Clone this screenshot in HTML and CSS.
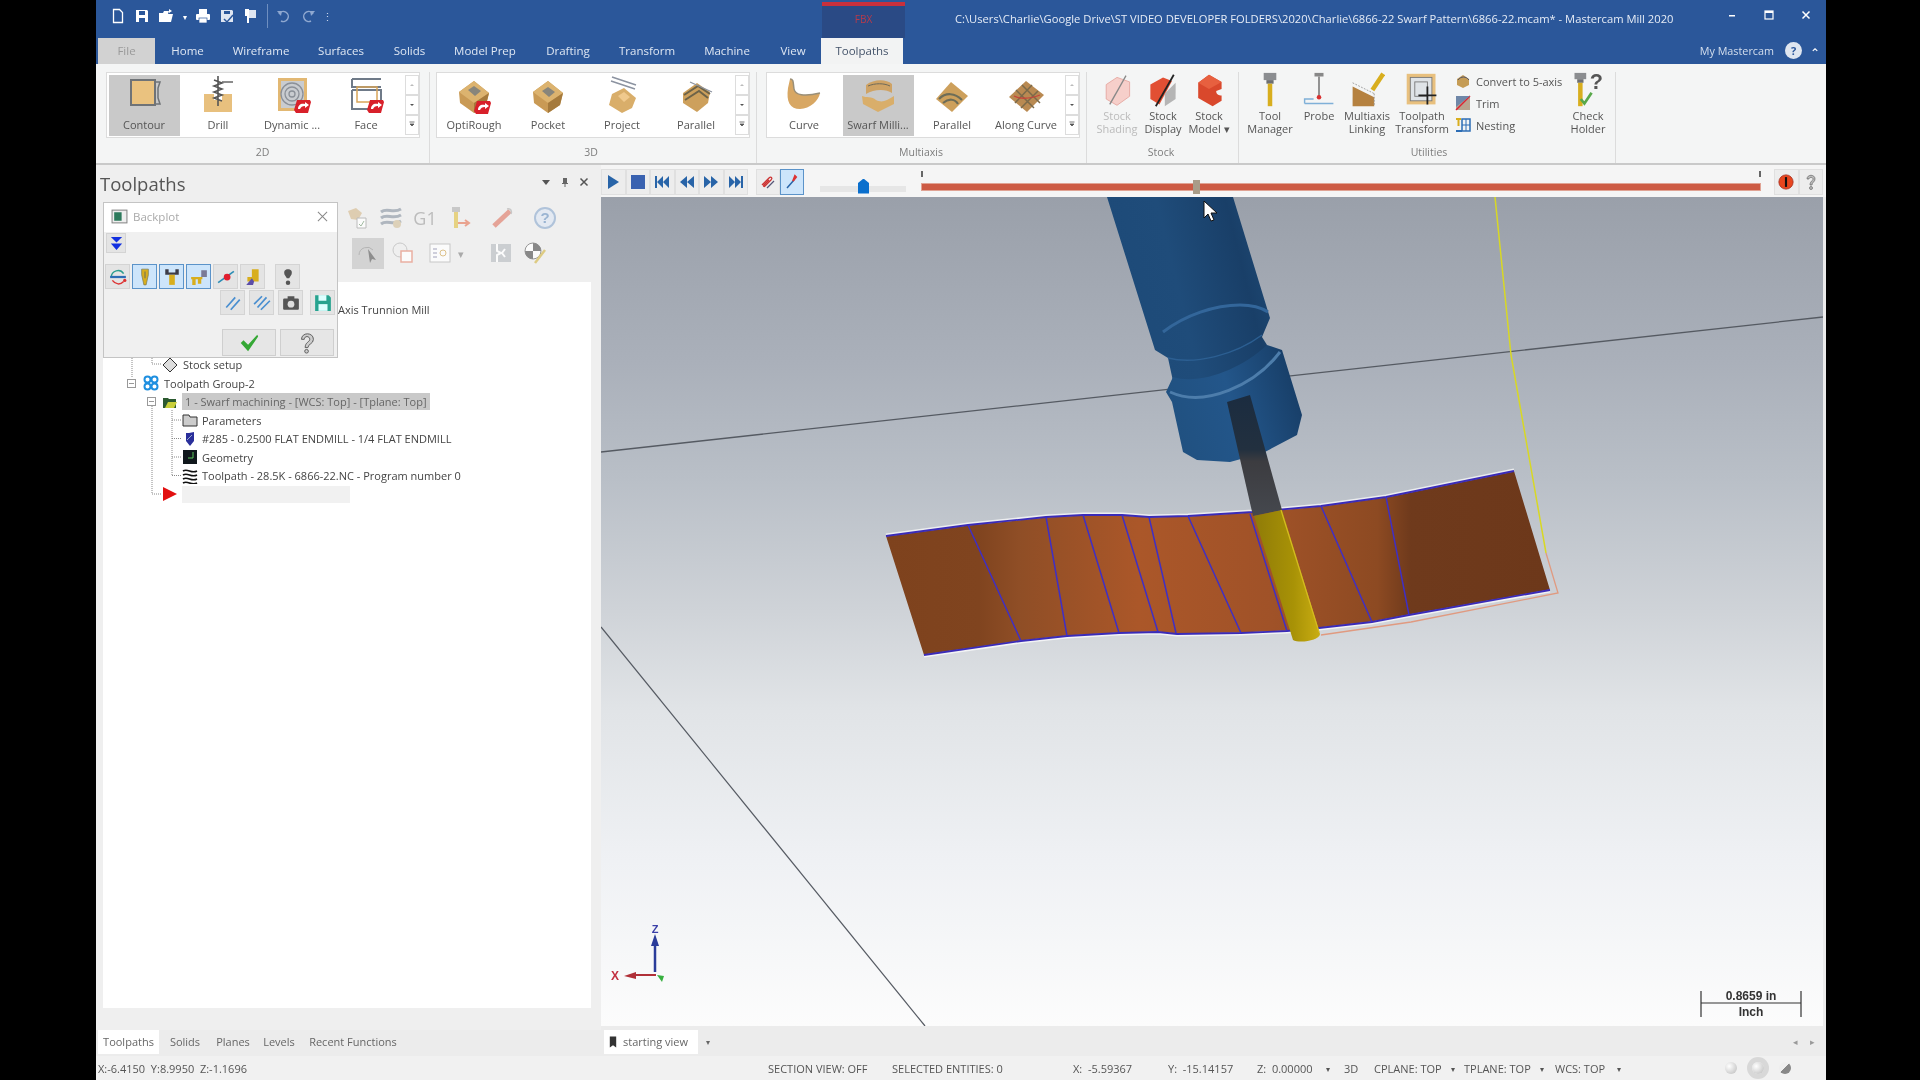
FILE: index.html
```html
<!DOCTYPE html>
<html lang="en">
<head>
<meta charset="utf-8">
<title>Mastercam Mill 2020</title>
<link rel="stylesheet" href="styles.css">
</head>
<body>
<svg class="defs" width="0" height="0" aria-hidden="true">
  <symbol id="badge" viewBox="0 0 18 16">
    <path d="M3 2h13l1 2-3 11H2L0 12z" fill="#d8202a"/>
    <path d="M4 11c0-4 3-6 7-5V4l4 3-4 3V8c-3 0-4 1-5 3z" fill="#fff"/>
  </symbol>
  <symbol id="block" viewBox="0 0 40 40">
    <path d="M20 5l15 12-3 12-12 8L6 27 5 16z" fill="#c99a55"/>
    <path d="M20 5l15 12-15 10L5 16z" fill="#dcb36f"/>
    <path d="M20 27l15-10-3 12-12 8z" fill="#a57a3c"/>
  </symbol>
  <symbol id="tool" viewBox="0 0 24 40">
    <rect x="5" y="1" width="14" height="8" fill="#8b8d90"/>
    <rect x="8" y="9" width="8" height="4" fill="#6d6f72"/>
    <rect x="9.500" y="13" width="5" height="25" fill="#d8ae1e"/>
  </symbol>
  <symbol id="scrollcol" viewBox="0 0 14 60">
    <rect x=".5" y=".5" width="13" height="19" fill="#fff" stroke="#ddd"/>
    <rect x=".5" y="20.500" width="13" height="19" fill="#fff" stroke="#ddd"/>
    <rect x=".5" y="40.500" width="13" height="19" fill="#fff" stroke="#ddd"/>
    <path d="M5 11l2-2 2 2z" fill="#bbb"/>
    <path d="M5 29h4l-2 2z" fill="#555"/>
    <path d="M4.500 47h5M5 49h4l-2 2z" stroke="#555" fill="#555" stroke-width=".8"/>
  </symbol>
</svg>

<div class="window">
  <header class="titlebar">
    <div class="qat">
      <span class="q"><svg viewBox="0 0 16 16"><path d="M3.500 1.500h6l3 3v10h-9z" fill="none" stroke="#fff" stroke-width="1.300"/></svg></span>
      <span class="q"><svg viewBox="0 0 16 16"><path d="M2 2h11l1 1v11H2z" fill="#fff"/><rect x="5" y="3" width="6" height="4" fill="#2b579a"/><rect x="5" y="10" width="6" height="4" fill="#2b579a"/></svg></span>
      <span class="q"><svg viewBox="0 0 16 16"><path d="M1 5h4l1-2h5l-1 3h5l-2 8H1z" fill="#fff"/><path d="M11 1l3 2-3 2z" fill="#fff"/></svg></span>
      <span class="qcaret">▾</span>
      <span class="q"><svg viewBox="0 0 16 16"><rect x="4" y="1" width="8" height="5" fill="#fff"/><rect x="1" y="6" width="14" height="6" rx="1" fill="#fff"/><rect x="4" y="10" width="8" height="5" fill="#fff" stroke="#2b579a" stroke-width=".7"/></svg></span>
      <span class="q"><svg viewBox="0 0 16 16"><path d="M2 2h11l1 1v11H2z" fill="#dfe6f2"/><rect x="5" y="3" width="6" height="3" fill="#2b579a"/><path d="M5 11l3 3 6-7" fill="none" stroke="#2b579a" stroke-width="1.500"/></svg></span>
      <span class="q"><svg viewBox="0 0 16 16"><path d="M2 1h4v14H4V8H2z" fill="#fff"/><path d="M6 2h7v8H6z" fill="#dfe6f2"/></svg></span>
      <span class="qsep"></span>
      <span class="q"><svg viewBox="0 0 16 16"><path d="M3 6a5 5 0 1 1 2 7" fill="none" stroke="#8fa8d0" stroke-width="1.500"/><path d="M1 3l5 0-1 5z" fill="#8fa8d0"/></svg></span>
      <span class="q"><svg viewBox="0 0 16 16"><path d="M13 6a5 5 0 1 0-2 7" fill="none" stroke="#8fa8d0" stroke-width="1.500"/><path d="M15 3l-5 0 1 5z" fill="#8fa8d0"/></svg></span>
      <span class="qmore">⋮</span>
    </div>
    <div class="ctx">FBX</div>
    <div class="doc">C:\Users\Charlie\Google Drive\ST VIDEO DEVELOPER FOLDERS\2020\Charlie\6866-22 Swarf Pattern\6866-22.mcam* - Mastercam Mill 2020</div>
    <div class="winctl">
      <span class="wc"><svg viewBox="0 0 12 12"><rect x="3" y="6" width="6" height="1.500" fill="#fff"/></svg></span>
      <span class="wc"><svg viewBox="0 0 12 12"><rect x="2" y="2" width="8" height="8" fill="none" stroke="#fff" stroke-width="1.200"/><rect x="2" y="2" width="8" height="2" fill="#fff"/></svg></span>
      <span class="wc"><svg viewBox="0 0 12 12"><path d="M2.500 2.500l7 7m0-7l-7 7" stroke="#fff" stroke-width="1.500"/></svg></span>
    </div>
  </header>

  <nav class="tabbar">
    <span class="tab file">File</span>
    <span class="tab t-home">Home</span>
    <span class="tab t-wire">Wireframe</span>
    <span class="tab t-surf">Surfaces</span>
    <span class="tab t-soli">Solids</span>
    <span class="tab t-prep">Model Prep</span>
    <span class="tab t-draf">Drafting</span>
    <span class="tab t-tran">Transform</span>
    <span class="tab t-mach">Machine</span>
    <span class="tab t-view">View</span>
    <span class="tab active">Toolpaths</span>
    <span class="mymc">My Mastercam</span>
    <span class="helpdot">?</span>
    <span class="collapse">⌃</span>
  </nav>

  <section class="ribbon">
    <div class="group g2d">
      <div class="gbody">
        <div class="gallery">
          <div class="item sel"><svg class="ic" viewBox="0 0 40 40"><rect x="7" y="4" width="24" height="25" fill="#eac27f" stroke="#6f7377" stroke-width="2"/><path d="M32 6h4l-2 6v10l2 6h-4" fill="none" stroke="#6f7377" stroke-width="1.500"/></svg><span>Contour</span></div>
          <div class="item"><svg class="ic" viewBox="0 0 40 40"><path d="M6 18h10v6h8v-6h10v18H6z" fill="#e8c07e"/><path d="M20 0v30M16 4l8 3-8 3 8 3-8 3 8 3-8 3 8 3" stroke="#555" stroke-width="1.600" fill="none"/><path d="M24 6h11" stroke="#666" stroke-width="1.500"/></svg><span>Drill</span></div>
          <div class="item"><svg class="ic" viewBox="0 0 40 40"><rect x="6" y="2" width="29" height="33" fill="#e2b873"/><rect x="9" y="5" width="23" height="27" fill="#c9ccd0"/><circle cx="20" cy="18" r="11" fill="none" stroke="#8b9098" stroke-width="1.300"/><circle cx="20" cy="18" r="7" fill="none" stroke="#8b9098" stroke-width="1.300"/><circle cx="20" cy="18" r="3" fill="none" stroke="#8b9098" stroke-width="1.300"/><use href="#badge" x="22" y="22" width="18" height="16"/></svg><span>Dynamic ...</span></div>
          <div class="item"><svg class="ic" viewBox="0 0 40 40"><path d="M6 3h29M6 3v8h29M6 14h29v14M6 14v19h20" fill="none" stroke="#6f7a88" stroke-width="2"/><rect x="11" y="11" width="20" height="15" fill="none" stroke="#d8a55a" stroke-width="1.500"/><use href="#badge" x="21" y="22" width="18" height="16"/></svg><span>Face</span></div>
          <svg class="scroll" viewBox="0 0 14 60"><use href="#scrollcol"/></svg>
        </div>
      </div>
      <div class="glabel">2D</div>
    </div>

    <div class="group g3d">
      <div class="gbody">
        <div class="gallery">
          <div class="item"><svg class="ic" viewBox="0 0 40 40"><use href="#block"/><path d="M14 14l6-4 7 5-6 5z" fill="#88857b"/><use href="#badge" x="20" y="23" width="18" height="16"/></svg><span>OptiRough</span></div>
          <div class="item"><svg class="ic" viewBox="0 0 40 40"><use href="#block"/><path d="M14 15l6-4 7 5-6 5z" fill="#88857b"/></svg><span>Pocket</span></div>
          <div class="item"><svg class="ic" viewBox="0 0 40 40"><path d="M10 1l24 8M9 5l24 8" stroke="#8c93a0" stroke-width="1.500"/><path d="M10 18l12-6 12 10-4 10-10 5-13-8z" fill="#d9ae6a"/><path d="M16 20l6-4 6 5-6 5z" fill="#f0c98d"/></svg><span>Project</span></div>
          <div class="item"><svg class="ic" viewBox="0 0 40 40"><path d="M7 17L21 7l13 9-2 11-11 9L7 27z" fill="#cda05c"/><path d="M8 19l14-9 12 8M9 24l14-9 9 7" stroke="#6d6348" stroke-width="2" fill="none"/><path d="M14 6l22 10" stroke="#8c93a0" stroke-width="1.300"/></svg><span>Parallel</span></div>
          <svg class="scroll" viewBox="0 0 14 60"><use href="#scrollcol"/></svg>
        </div>
      </div>
      <div class="glabel">3D</div>
    </div>

    <div class="group gmulti">
      <div class="gbody">
        <div class="gallery">
          <div class="item"><svg class="ic" viewBox="0 0 40 40"><path d="M6 3c4 0 3 4 4 10s10 8 26 4c-1 7-10 16-20 16S2 26 4 12z" fill="#d8a763"/><path d="M6 3c4 0 3 4 4 10s10 8 26 4" fill="none" stroke="#9a8f78" stroke-width="1.500"/></svg><span>Curve</span></div>
          <div class="item sel"><svg class="ic" viewBox="0 0 40 40"><path d="M8 9c8-6 20-6 26-1v9c-6-4-18-4-26 1z" fill="#cfa365"/><path d="M4 20c4 2 10 0 14 4 6 3 10 1 18-4v8L20 36 5 28z" fill="#d9ae6a"/><path d="M10 10c7-3 16-3 22 0" fill="none" stroke="#6f6a5a"/></svg><span>Swarf Milli...</span></div>
          <div class="item"><svg class="ic" viewBox="0 0 40 40"><path d="M4 23L19 6l17 14-16 16z" fill="#cda05c"/><path d="M7 23c7-7 16-6 23 1M11 27c6-5 12-4 15 1" stroke="#6d6d58" stroke-width="2.200" fill="none"/></svg><span>Parallel</span></div>
          <div class="item"><svg class="ic" viewBox="0 0 40 40"><path d="M3 21L20 5l18 14-17 17z" fill="#b98a52"/><path d="M10 14l18 18M16 9l18 18M26 9L9 27M32 15L15 32" stroke="#7b6a4a" stroke-width="1.500"/><path d="M8 20c8 4 18 2 26-1" stroke="#c8443a" stroke-width="1.300" fill="none"/></svg><span>Along Curve</span></div>
          <svg class="scroll" viewBox="0 0 14 60"><use href="#scrollcol"/></svg>
        </div>
      </div>
      <div class="glabel">Multiaxis</div>
    </div>

    <div class="group gstock">
      <div class="gbody">
        <div class="big w46 dim"><svg class="ic" viewBox="0 0 40 40"><path d="M8 14l12-8 14 5v16l-14 10-12-7z" fill="#f6cfca" stroke="#e5a7a0"/><path d="M12 36L30 4" stroke="#888" stroke-width="1.500"/></svg><span>Stock<br>Shading</span></div>
        <div class="big w46"><svg class="ic" viewBox="0 0 40 40"><path d="M6 14l14-8 10 4-14 26-10-6z" fill="#e24f33"/><path d="M22 24l12-12v18l-12 8z" fill="#b5b5b5"/><path d="M12 38L32 3" stroke="#222" stroke-width="2"/></svg><span>Stock<br>Display</span></div>
        <div class="big w46"><svg class="ic" viewBox="0 0 40 40"><path d="M8 12l12-9 14 8v8l-6 2c0 4 3 5 6 5v6l-10 6-16-9z" fill="#d9482c"/><path d="M8 12l12-9 14 8-14 8z" fill="#e7603f"/></svg><span>Stock<br>Model ▾</span></div>
      </div>
      <div class="glabel">Stock</div>
    </div>

    <div class="group gutil">
      <div class="gbody">
        <div class="big w50"><svg class="ic" viewBox="0 0 24 40"><use href="#tool"/></svg><span>Tool<br>Manager</span></div>
        <div class="big w48"><svg class="ic" viewBox="0 0 40 40"><rect x="15" y="1" width="10" height="4" fill="#888"/><path d="M20 5v22" stroke="#888" stroke-width="2"/><circle cx="20" cy="28" r="2.500" fill="#d93030"/><path d="M4 35h32M4 35v-5h10" stroke="#7fb0d8" stroke-width="1.600" fill="none"/></svg><span>Probe</span></div>
        <div class="big w48"><svg class="ic" viewBox="0 0 40 40"><path d="M4 16l24 12v10H4z" fill="#b5813f"/><path d="M4 12l24 12" stroke="#999" stroke-dasharray="2 1.500" fill="none"/><path d="M26 20L38 2" stroke="#d8ae1e" stroke-width="5"/><path d="M28 24v14" stroke="#999" stroke-dasharray="2 1.500"/></svg><span>Multiaxis<br>Linking</span></div>
        <div class="big w62"><svg class="ic" viewBox="0 0 40 40"><rect x="3" y="2" width="32" height="34" fill="#e8c07e"/><rect x="7" y="6" width="24" height="26" fill="#dfe3e7" stroke="#777"/><rect x="12" y="11" width="14" height="16" fill="none" stroke="#777"/><path d="M26 16v20M16 26h20" stroke="#222" stroke-width="2"/></svg><span>Toolpath<br>Transform</span></div>
        <div class="smalls">
          <div class="sm"><svg viewBox="0 0 16 16"><path d="M2 6l6-4 6 4v6l-6 3-6-3z" fill="#c59c55"/><path d="M3 7c3-4 8-4 11 0" stroke="#556" fill="none"/></svg><span>Convert to 5-axis</span></div>
          <div class="sm"><svg viewBox="0 0 16 16"><rect x="1" y="1" width="14" height="14" fill="#b8a48e"/><path d="M1 15L15 1" stroke="#d23" stroke-width="1.500"/><path d="M1 1h14L1 12z" fill="#6f87a8"/></svg><span>Trim</span></div>
          <div class="sm"><svg viewBox="0 0 16 16"><rect x="7" y="2" width="8" height="12" fill="none" stroke="#2c6db5" stroke-width="1.500"/><path d="M7 8h8M11 2v12" stroke="#2c6db5"/><path d="M1 2h5M3.500 2v7" stroke="#d8ae1e" stroke-width="2"/><path d="M1 14h6" stroke="#2c6db5" stroke-width="2"/></svg><span>Nesting</span></div>
        </div>
        <div class="big w50 check"><svg class="ic" viewBox="0 0 40 40"><rect x="5" y="1" width="13" height="7" fill="#8b8d90"/><rect x="8" y="8" width="7" height="4" fill="#6d6f72"/><rect x="9" y="12" width="5" height="26" fill="#d8ae1e"/><path d="M12 30l4 5 8-12" fill="none" stroke="#58a84a" stroke-width="3"/><text x="22" y="19" class="q-mark">?</text></svg><span>Check<br>Holder</span></div>
      </div>
      <div class="glabel gl-util">Utilities</div>
    </div>
  </section>

  <div class="main">
    <aside class="panel">
      <div class="phead">
        <span class="ptitle">Toolpaths</span>
        <span class="pctl">
          <svg viewBox="0 0 12 12"><path d="M2 4h8L6 9z" fill="#555"/></svg>
          <svg viewBox="0 0 12 12"><path d="M4 2h4v5h1v1H6.500v3h-1V8H3V7h1z" fill="#666"/></svg>
          <svg viewBox="0 0 12 12"><path d="M2.500 2.500l7 7m0-7l-7 7" stroke="#555" stroke-width="1.500"/></svg>
        </span>
      </div>
      <div class="tools r1">
        <span class="tl"><svg viewBox="0 0 24 24"><path d="M3 5l8-3 6 5-4 7-7-1z" fill="#d9c29d"/><path d="M12 12h9v10h-9z" fill="#fff" stroke="#aaa"/><path d="M14 18l2 2 3-5" stroke="#8a8" fill="none"/></svg></span>
        <span class="tl"><svg viewBox="0 0 24 24"><path d="M2 6c6-5 12 2 20-3M2 12c6-5 12 2 20-3M2 18c6-5 12 2 20-3" stroke="#9aa4af" stroke-width="3" fill="none"/><circle cx="18" cy="18" r="4" fill="#d8c8a8"/></svg></span>
        <span class="tl g1">G1</span>
        <span class="tl"><svg viewBox="0 0 24 24"><rect x="5" y="1" width="8" height="5" fill="#bbb"/><path d="M9 6v16" stroke="#e3c95e" stroke-width="4"/><path d="M11 17h11m-4-3l4 3-4 3" stroke="#e88a70" stroke-width="2" fill="none"/></svg></span>
        <span class="tl gap9"><svg viewBox="0 0 24 24"><path d="M4 20L20 5" stroke="#e28a7a" stroke-width="5"/><path d="M17 3c4-1 5 2 4 5" stroke="#bbb" stroke-width="1.500" fill="none"/></svg></span>
        <span class="tl gap9"><svg viewBox="0 0 24 24"><circle cx="12" cy="12" r="10" fill="#dfe8f3" stroke="#9bb5d4" stroke-width="2"/><text x="12" y="17" class="tl-q">?</text></svg></span>
      </div>
      <div class="tools r2">
        <span class="tl on"><svg viewBox="0 0 24 24"><path d="M3 14a8 8 0 0 1 14-5" stroke="#aaa" fill="none"/><path d="M12 8l8 11-4-1-2 4z" fill="#777"/></svg></span>
        <span class="tl"><svg viewBox="0 0 24 24"><circle cx="9" cy="9" r="7" fill="none" stroke="#bbb"/><rect x="10" y="10" width="11" height="11" fill="#fff" stroke="#e89a88" stroke-width="1.500"/></svg></span>
        <span class="tl m4"><svg viewBox="0 0 24 24"><rect x="2" y="3" width="20" height="18" fill="#fff" stroke="#bbb"/><path d="M5 8h4M5 12h4M5 16h4" stroke="#88a" /><circle cx="15" cy="12" r="3" fill="none" stroke="#d8b26a"/></svg></span>
        <span class="tlcaret">▾</span>
        <span class="tl m10"><svg viewBox="0 0 24 24"><path d="M2 3h20v18H2z" fill="#bfc3c8"/><path d="M8 3v7l4 2-4 2v7M16 8l-3 4 3 4" stroke="#fff" stroke-width="2" fill="none"/></svg></span>
        <span class="tl"><svg viewBox="0 0 24 24"><circle cx="10" cy="10" r="8" fill="#fff" stroke="#777"/><path d="M10 2a8 8 0 0 1 8 8h-8zM10 18a8 8 0 0 1-8-8h8z" fill="#666"/><path d="M12 22l10-13" stroke="#d8c060" stroke-width="2.500"/></svg></span>
      </div>

      <div class="tree">
        <svg class="treelines" viewBox="0 0 488 240"><path d="M29 70V96M49 70V82H59M49 124V212H59M69 128V193.500M69 138H79M69 156.500H79M69 175H79M69 193.500H79" fill="none" stroke="#888" stroke-dasharray="1 1"/></svg>
        <div class="row axis"><span class="label">Axis Trunnion Mill</span></div>
        <div class="row"></div>
        <div class="row"></div>
        <div class="row l-stock"><svg class="ti" viewBox="0 0 16 16"><path d="M8 1l7 7-7 7-7-7z" fill="#ddd" stroke="#333"/></svg><span class="label">Stock setup</span></div>
        <div class="row l-group"><span class="exp"></span><svg class="ti" viewBox="0 0 16 16"><g fill="none" stroke="#1e8fe0" stroke-width="2"><circle cx="4.500" cy="4.500" r="3"/><circle cx="11.500" cy="4.500" r="3"/><circle cx="4.500" cy="11.500" r="3"/><circle cx="11.500" cy="11.500" r="3"/></g></svg><span class="label">Toolpath Group-2</span></div>
        <div class="row l-op"><span class="exp"></span><svg class="ti" viewBox="0 0 16 16"><path d="M1 4h5l1 1h7v9H1z" fill="#2c5a30"/><path d="M3 14l3-6h9l-3 6z" fill="#c9cf3a"/></svg><span class="label hl">1 - Swarf machining - [WCS: Top] - [Tplane: Top]</span></div>
        <div class="row l-leaf"><svg class="ti" viewBox="0 0 16 16"><path d="M1 3h6l1 2h7v9H1z" fill="#ccc" stroke="#333"/></svg><span class="label">Parameters</span></div>
        <div class="row l-leaf"><svg class="ti" viewBox="0 0 16 16"><path d="M4 2h3l5-1v9l-4 5-4-5z" fill="#2a2f9b"/><path d="M5 9l5-5" stroke="#9ac" /></svg><span class="label">#285 - 0.2500 FLAT ENDMILL - 1/4 FLAT ENDMILL</span></div>
        <div class="row l-leaf"><svg class="ti" viewBox="0 0 16 16"><rect x="1" y="1" width="14" height="14" fill="#10171c"/><path d="M11 3v6H6" stroke="#5ac85a" fill="none"/></svg><span class="label">Geometry</span></div>
        <div class="row l-leaf"><svg class="ti" viewBox="0 0 16 16"><rect x="1" y="1" width="14" height="14" fill="#fff"/><path d="M1 3c5-3 8 3 14 0M1 7c5-3 8 3 14 0M1 11c5-3 8 3 14 0M1 15c5-3 8 3 14 0" stroke="#111" stroke-width="1.700" fill="none"/></svg><span class="label">Toolpath - 28.5K - 6866-22.NC - Program number 0</span></div>
        <div class="row l-stock"><svg class="ti" viewBox="0 0 16 16"><path d="M1 1l14 7-14 7z" fill="#e21010"/></svg><span class="blank"></span></div>
      </div>

      <div class="dialog">
        <div class="dlg-title">
          <svg class="dlg-ic" viewBox="0 0 16 16"><rect x="1" y="2" width="14" height="12" fill="#eee" stroke="#888"/><rect x="3" y="4" width="7" height="8" fill="#2d7a5c"/></svg>
          <span>Backplot</span>
          <svg class="dlg-x" viewBox="0 0 12 12"><path d="M1 1l10 10m0-10L1 11" stroke="#888" stroke-width="1.100"/></svg>
        </div>
        <div class="dlg-body">
          <span class="db first"><svg viewBox="0 0 16 16"><path d="M2 1h12L8 7zM2 8h12l-6 7z" fill="#1230e0"/></svg></span>
          <div class="dlg-row">
            <span class="db"><svg viewBox="0 0 16 16"><path d="M2 8a6 6 0 0 1 11-3" fill="none" stroke="#2a9d8f" stroke-width="1.300"/><path d="M1 8h14" stroke="#2c6db5" stroke-width="2"/><path d="M3 11c3 4 7 4 10 1" stroke="#d33" stroke-width="1.300" fill="none"/><circle cx="14" cy="11" r="1.500" fill="#d33"/></svg></span>
            <span class="db on"><svg viewBox="0 0 16 16"><path d="M5 1v5l2 9h2l2-9V1z" fill="#d8ae1e" stroke="#775" stroke-width=".6"/><path d="M8 3v6" stroke="#775"/></svg></span>
            <span class="db on"><svg viewBox="0 0 16 16"><path d="M2 1h3v3h6V1h3v5H2z" fill="#3c3c48"/><path d="M5.500 6h5v9h-5z" fill="#d8ae1e"/></svg></span>
            <span class="db on"><svg viewBox="0 0 16 16"><path d="M1 8h10v2H1zM2 10h3v5H2zM7 10h3v4H7z" fill="#d8ae1e"/><rect x="10" y="2" width="5" height="6" fill="#7a7a96"/></svg></span>
            <span class="db"><svg viewBox="0 0 16 16"><path d="M1 13L15 3" stroke="#2c8db5" stroke-width="1.500"/><circle cx="9" cy="8" r="3" fill="#e01f2f"/></svg></span>
            <span class="db"><svg viewBox="0 0 16 16"><path d="M7 1h6v11H3V8h4z" fill="#d8ae1e"/><path d="M2 15l5-6 2 3-1 3z" fill="#5c4ea8"/></svg></span>
            <span class="db gap10"><svg viewBox="0 0 16 16"><path d="M8 1c3 0 4 2 3 5l-2 3H7L5 6C4 3 5 1 8 1z" fill="#555"/><circle cx="8" cy="13" r="2" fill="#555"/></svg></span>
          </div>
          <div class="dlg-row r">
            <span class="db"><svg viewBox="0 0 16 16"><path d="M2 12L10 3M6 14l8-9" stroke="#4a8fd0" stroke-width="1.500"/></svg></span>
            <span class="db"><svg viewBox="0 0 16 16"><path d="M1 9l7-7M4 12l8-9M7 14l8-8" stroke="#4a8fd0" stroke-width="1.500"/></svg></span>
            <span class="db"><svg viewBox="0 0 16 16"><rect x="1" y="4" width="14" height="10" rx="1" fill="#555"/><rect x="5" y="2" width="6" height="3" fill="#555"/><circle cx="8" cy="9" r="3" fill="#ddd"/></svg></span>
            <span class="db gap3"><svg viewBox="0 0 16 16"><path d="M1 1h12l2 2v12H1z" fill="#27a38f"/><rect x="4" y="1" width="7" height="5" fill="#dff"/><rect x="4" y="9" width="8" height="6" fill="#dff"/></svg></span>
          </div>
          <div class="dlg-big">
            <span class="bb"><svg viewBox="0 0 24 24"><path d="M3 12l3-3 5 5L21 3l1 2-11 16z" fill="#35a835"/></svg></span>
            <span class="bb"><svg viewBox="0 0 24 24"><path d="M6 8c0-8 13-8 13 0 0 5-6 5-6 9h-3c0-6 5-6 5-9 0-4-6-4-6 0z" fill="#ccc" stroke="#555"/><circle cx="11.500" cy="21" r="2" fill="#ccc" stroke="#555"/></svg></span>
          </div>
        </div>
      </div>
    </aside>

    <main class="view">
      <div class="plotbar">
        <span class="pb"><svg viewBox="0 0 16 16"><path d="M3 1l11 7-11 7z" fill="#2864a8"/></svg></span>
        <span class="pb"><svg viewBox="0 0 16 16"><rect x="1" y="1" width="14" height="14" fill="#3a62b0"/></svg></span>
        <span class="pb"><svg viewBox="0 0 16 16"><path d="M1 2h2v12H1zM9 2v12L3 8zM15 2v12L9 8z" fill="#2864a8"/></svg></span>
        <span class="pb"><svg viewBox="0 0 16 16"><path d="M8 2v12L1 8zM15 2v12L8 8z" fill="#2864a8"/></svg></span>
        <span class="pb"><svg viewBox="0 0 16 16"><path d="M1 2v12l7-6zM8 2v12l7-6z" fill="#2864a8"/></svg></span>
        <span class="pb"><svg viewBox="0 0 16 16"><path d="M1 2v12l6-6zM7 2v12l6-6zM13 2h2v12h-2z" fill="#2864a8"/></svg></span>
        <span class="pb mode"><svg viewBox="0 0 16 16"><path d="M2 11l7-7c2-2 4 0 2 2l-6 6c-1 1-2 0-1-1l5-5" stroke="#c33" fill="none" stroke-width="1.300"/><path d="M7 14l7-7" stroke="#557" stroke-width="1.200"/></svg></span>
        <span class="pb onb"><svg viewBox="0 0 16 16"><path d="M3 14l7-8" stroke="#2864a8" stroke-width="1.500"/><path d="M9 7l2-5 1 1z" stroke="#d33" stroke-width="2"/></svg></span>
        <span class="slider"><span class="thumb"></span></span>
        <span class="progress"><span class="tick-l"></span><span class="tick-r"></span><span class="ptick"></span></span>
        <span class="pb pb-end"><svg viewBox="0 0 18 18"><circle cx="9" cy="9" r="8" fill="#e8461f" stroke="#a32"/><rect x="7.800" y="3.500" width="2.400" height="11" fill="#111"/></svg></span>
        <span class="pb"><svg viewBox="0 0 16 16"><path d="M4 5c0-5 8-5 8 0 0 3-3 3-3 6H7c0-4 3-4 3-6 0-2-4-2-4 0z" fill="#bbb" stroke="#666" stroke-width=".7"/><circle cx="8" cy="14" r="1.500" fill="#bbb" stroke="#666" stroke-width=".7"/></svg></span>
      </div>
      <div class="canvas">
        <svg class="scene" viewBox="601 197 1222 829">
          <defs>
            <linearGradient id="holder" gradientUnits="userSpaceOnUse" x1="1107" y1="280" x2="1270" y2="240"><stop offset="0" stop-color="#1d4a78"/><stop offset=".4" stop-color="#1f4c7a"/><stop offset=".8" stop-color="#193f68"/><stop offset="1" stop-color="#1f4a75"/></linearGradient>
            <linearGradient id="collar" gradientUnits="userSpaceOnUse" x1="1166" y1="430" x2="1302" y2="390"><stop offset="0" stop-color="#20507f"/><stop offset=".5" stop-color="#23568a"/><stop offset="1" stop-color="#173d66"/></linearGradient>
            <linearGradient id="face" gradientUnits="userSpaceOnUse" x1="886" y1="0" x2="1550" y2="0"><stop offset="0" stop-color="#7e421d"/><stop offset=".14" stop-color="#80441f"/><stop offset=".2" stop-color="#8f4e26"/><stop offset=".38" stop-color="#ab5729"/><stop offset=".58" stop-color="#a05228"/><stop offset=".74" stop-color="#8d4a22"/><stop offset=".79" stop-color="#6f3a1c"/><stop offset="1" stop-color="#6d381a"/></linearGradient>
            <linearGradient id="stem" x1="0" y1="0" x2="0" y2="1"><stop offset="0" stop-color="#1b2c40"/><stop offset=".45" stop-color="#22303f"/><stop offset=".55" stop-color="#3c3c40"/><stop offset="1" stop-color="#45484e"/></linearGradient>
            <linearGradient id="flute" x1="0" y1="0" x2="1" y2="0"><stop offset="0" stop-color="#8f7b08"/><stop offset=".6" stop-color="#a89206"/><stop offset="1" stop-color="#c9ad12"/></linearGradient>
          </defs>
          <path d="M601 452L1823 317" stroke="#555a62" stroke-width="1.300"/>
          <path d="M601 627L925 1026" stroke="#555a62" stroke-width="1.200"/>
          <path d="M1495 197L1511 355 1546 553" fill="none" stroke="#d8d824" stroke-width="1.500"/>
          <path d="M1546 553L1558 593 1411 622 1321 635" fill="none" stroke="#e09a80" stroke-width="1.300"/>
          <path d="M886 536L968 525 1046 517 1083 515 1122 515 1149 517 1188 516 1253 512 1321 506 1386 497 1514 471 1550 590 1409 615 1372 622 1319 628 1287 631 1241 633 1177 634 1158 632 1119 633 1067 636 1021 641 924 655Z" fill="url(#face)"/>
          <path d="M886 535L968 524 1046 516 1083 514 1122 514 1149 516 1188 515 1253 511 1321 505 1386 496 1514 470M1550 591L1409 616 1372 623 1319 629 1287 632 1241 634 1177 635 1158 633 1119 634 1067 637 1021 642 924 656" fill="none" stroke="#fff" stroke-opacity=".7" stroke-width="3"/>
          <path d="M886 536L968 525 1046 517 1083 515 1122 515 1149 517 1188 516 1253 512 1321 506 1386 497 1514 471M1550 590L1409 615 1372 622 1319 628 1287 631 1241 633 1177 634 1158 632 1119 633 1067 636 1021 641 924 655" fill="none" stroke="#3a2bb8" stroke-width="1.800"/>
          <path d="M968 525L1021 641M1046 517L1067 636M1083 515L1119 633M1122 515L1158 632M1149 517L1176 633M1188 516L1241 633M1250 514L1287 631M1321 506L1372 622M1386 497L1409 615" fill="none" stroke="#3f2fc4" stroke-width="1.500"/>
          <path d="M1107 197H1233L1270 318 1262 337 1267 345 1264 375 1176 395 1168 358 1155 350Z" fill="url(#holder)"/>
          <path d="M1267 345L1282 350 1302 415 1297 435 1263 453 1230 462 1197 460 1183 452 1172 402 1166 392 1173 377C1200 385 1240 370 1267 345Z" fill="url(#collar)"/>
          <path d="M1163 332C1185 315 1215 305 1240 305 1252 305 1262 308 1268 312" fill="none" stroke="#33669a" stroke-width="3"/>
          <path d="M1168 358C1195 365 1235 355 1262 335" fill="none" stroke="#2c5f92" stroke-width="1.500"/>
          <path d="M1170 392C1205 408 1255 385 1280 352" fill="none" stroke="#4d7dab" stroke-width="3"/>
          <path d="M1227 402L1250 395 1282 510 1253 516Z" fill="url(#stem)"/>
          <path d="M1254 516L1282 510 1320 634C1320 640 1300 644 1293 640Z" fill="url(#flute)"/>
          <path d="M1281 510L1319 632" stroke="#d6bc20" stroke-width="1.200"/>
          <g transform="translate(1204 201)"><path d="M0 0v17l4-4 3 7 3-1-3-7h6z" fill="#fff" stroke="#111"/></g>
          <path d="M655 972V944" stroke="#2a3c9a" stroke-width="2.500"/>
          <path d="M655 934l-4 12h8z" fill="#2a3c9a"/>
          <path d="M656 975H630" stroke="#b03038" stroke-width="2"/>
          <path d="M624 976l12-4v7z" fill="#b03038"/>
          <path d="M657 975l7 1-2 6z" fill="#38b040"/>
          <text x="655" y="933" class="ax-z">Z</text>
          <text x="615" y="980" class="ax-x">X</text>
          <path d="M1701 991v26M1801 991v26M1701 1003h100" fill="none" stroke="#333" stroke-width="1.200"/>
          <text x="1751" y="1000" class="sc">0.8659 in</text>
          <text x="1751" y="1016" class="sc">Inch</text>
        </svg>
      </div>
    </main>
  </div>

  <div class="lower">
    <div class="ltabs">
      <span class="lt on">Toolpaths</span>
      <span class="lt lt-sol">Solids</span>
      <span class="lt lt-pla">Planes</span>
      <span class="lt lt-lev">Levels</span>
      <span class="lt lt-rec">Recent Functions</span>
    </div>
    <div class="vtabs">
      <span class="vt"><svg viewBox="0 0 10 14"><path d="M1 0h8v14l-4-3-4 3z" fill="#333"/></svg>starting view</span>
      <span class="vplus">▾</span>
      <span class="varrows">◂ ▸</span>
    </div>
  </div>

  <footer class="status">
    <span class="s-pos">X:-6.4150 &nbsp;Y:8.9950 &nbsp;Z:-1.1696</span>
    <span class="s-sec">SECTION VIEW: OFF</span>
    <span class="s-sel">SELECTED ENTITIES: 0</span>
    <span class="s-x">X: &nbsp;-5.59367</span>
    <span class="s-y">Y: &nbsp;-15.14157</span>
    <span class="s-z">Z: &nbsp;0.00000</span>
    <span class="s-c1">▾</span>
    <span class="s-3d">3D</span>
    <span class="s-cp">CPLANE: TOP</span>
    <span class="s-c2">▾</span>
    <span class="s-tp">TPLANE: TOP</span>
    <span class="s-c3">▾</span>
    <span class="s-wc">WCS: TOP</span>
    <span class="s-c4">▾</span>
    <span class="ball"></span>
    <span class="ball selball"></span>
    <span class="ball half"></span>
  </footer>
</div>
</body>
</html>
```

FILE: styles.css
```css
* { box-sizing: border-box; }
html, body { margin: 0; height: 100%; }
body {
  width: 1920px;
  height: 1080px;
  overflow: hidden;
  background: #000;
  padding-left: 96px;
  font-family: "Open Sans", "Liberation Sans", sans-serif;
  font-size: 11px;
  color: #555;
}
.defs { position: absolute; }
.window {
  width: 1730px;
  height: 1080px;
  display: flex;
  flex-direction: column;
  background: #f2f3f3;
  filter: blur(0.45px);
}

/* Title bar */
.titlebar {
  height: 38px;
  display: flex;
  background: #2b579a;
  color: #e6ecf6;
  flex: none;
}
.qat { width: 726px; display: flex; align-items: center; padding-left: 10px; height: 32px; }
.q { width: 24px; display: flex; justify-content: center; }
.q svg { width: 16px; height: 16px; }
.qcaret { width: 13px; font-size: 8px; text-align: center; color: #fff; }
.qsep { width: 9px; height: 24px; border-right: 1px solid #6f8fc0; transform: translateX(-4px); }
.qmore { width: 14px; text-align: center; color: #c5d3ea; font-size: 11px; }
.ctx {
  width: 83px;
  background: #2a4a85;
  border-top: 4px solid #c8303c;
  margin-top: 2px;
  color: #b83a4a;
  text-align: center;
  font-size: 10px;
  line-height: 26px;
}
.doc { margin-left: 50px; line-height: 38px; font-size: 11.200px; white-space: nowrap; }
.winctl { margin-left: auto; display: flex; padding-right: 2px; height: 30px; align-items: center; }
.wc { width: 37px; display: flex; justify-content: center; }
.wc svg { width: 12px; height: 12px; }

/* Tab bar */
.tabbar {
  height: 26px;
  flex: none;
  display: flex;
  align-items: stretch;
  background: #2b579a;
  color: #dfe7f3;
  font-size: 11.500px;
  line-height: 26px;
  padding-left: 2px;
}
.tab { text-align: center; flex: none; }
.file { width: 57px; background: #d2d2d2; color: #9a9a9a; }
.t-home { width: 65px; }
.t-wire { width: 82px; }
.t-surf { width: 78px; }
.t-soli { width: 59px; }
.t-prep { width: 92px; }
.t-draf { width: 74px; }
.t-tran { width: 84px; }
.t-mach { width: 76px; }
.t-view { width: 56px; }
.active { width: 82px; background: #f2f3f3; color: #44546a; }
.mymc { margin-left: auto; color: #d5dfee; font-size: 10.800px; }
.helpdot {
  width: 17px; height: 17px; margin: 4px 0 0 11px;
  border-radius: 50%;
  background: #dfe6f0;
  color: #2b579a;
  font-size: 11px; line-height: 17px; text-align: center; font-weight: 700;
}
.collapse { width: 22px; margin-left: 2px; text-align: center; color: #fff; font-size: 12px; line-height: 30px; }

/* Ribbon */
.ribbon {
  height: 101px;
  flex: none;
  display: flex;
  background: #f4f5f5;
  border-bottom: 2px solid #c9c9c9;
  padding-top: 8px;
}
.group {
  display: flex;
  flex-direction: column;
  border-right: 1px solid #dcdcdc;
  height: 91px;
  flex: none;
}
.g2d { width: 334px; padding-left: 10px; }
.g3d { width: 327px; padding-left: 6px; }
.gmulti { width: 330px; padding-left: 9px; }
.gstock { width: 152px; padding-left: 7px; }
.gutil { width: 377px; padding-left: 6px; }
.gbody { height: 66px; display: flex; flex: none; }
.glabel { text-align: center; line-height: 24px; margin-top: 2px; font-size: 10.500px; color: #7d7d7d; padding-right: 10px; }
.gl-util { padding-right: 0; transform: translateX(-1px); }
.gallery {
  width: 314px;
  height: 66px;
  display: flex;
  background: #fff;
  border: 1px solid #dcdcdc;
  padding-top: 2px;
}
.item {
  width: 74px;
  height: 61px;
  flex: none;
  display: flex;
  flex-direction: column;
  align-items: center;
  white-space: nowrap;
  font-size: 11px;
  color: #555;
  line-height: 15px;
}
.item.sel { background: #c9c9c9; width: 71px; margin: 0 1.500px; }
.ic { width: 40px; height: 40px; margin-top: 1px; margin-bottom: 1px; flex: none; }
.scroll { width: 14px; height: 60px; flex: none; margin-left: 2px; }
.big {
  display: flex;
  flex-direction: column;
  align-items: center;
  text-align: center;
  white-space: nowrap;
  line-height: 12.500px;
  font-size: 11px;
  color: #555;
}
.big .ic { width: 36px; height: 36px; margin: 0 0 2px; }
.w46 { width: 46px; }
.w48 { width: 48px; }
.w50 { width: 50px; }
.w62 { width: 62px; }
.dim { color: #bbb; }
.check { margin-left: 10px; }
.smalls { width: 100px; display: flex; flex-direction: column; margin-top: -2px; }
.sm { display: flex; align-items: center; height: 22px; white-space: nowrap; font-size: 11px; }
.sm svg { width: 16px; height: 16px; margin-right: 5px; margin-left: 2px; flex: none; }
.q-mark { font-family: "Liberation Sans", sans-serif; font-size: 24px; font-weight: 700; fill: #555; }

/* Main area */
.main { height: 865px; flex: none; display: flex; }
.panel { width: 505px; flex: none; display: flex; flex-direction: column; background: #efefef; position: relative; }
.phead { height: 35px; display: flex; align-items: center; padding: 0 11px 0 4px; }
.ptitle { font-size: 18.500px; color: #555; margin-top: 1px; }
.pctl { margin-left: auto; display: flex; gap: 7px; margin-top: -1px; }
.pctl svg { width: 12px; height: 12px; }
.tools { height: 35px; display: flex; align-items: center; flex: none; }
.r1 { padding-left: 244px; }
.r2 { padding-left: 256px; padding-top: 1px; }
.tl { width: 34px; height: 31px; display: flex; align-items: center; justify-content: center; flex: none; }
.tl svg { width: 24px; height: 24px; opacity: .75; }
.tl.on { background: #d3d3d3; width: 32px; margin-right: 2px; }
.g1 { font-size: 18px; color: #bcbcbc; }
.gap9 { margin-left: 9px; }
.m4 { margin-left: 3px; }
.m10 { margin-left: 0; }
.tlcaret { width: 27px; text-align: left; color: #aaa; font-size: 11px; padding-left: 1px; }
.tl-q { font-family: "Liberation Sans", sans-serif; font-size: 15px; font-weight: 700; fill: #7ea1c9; text-anchor: middle; }
.tree {
  position: relative;
  margin: 12px 10px 22px 7px;
  flex: 1;
  background: #fff;
  padding-top: 18px;
  font-size: 11px;
  color: #444;
}
.treelines { position: absolute; left: 0; top: 0; width: 488px; height: 240px; }
.row { height: 18.500px; display: flex; align-items: center; white-space: nowrap; position: relative; }
.label { line-height: 17px; }
.axis { padding-left: 235px; }
.ti { width: 16px; height: 16px; flex: none; }
.l-stock { padding-left: 59px; }
.l-stock .label { margin-left: 5px; }
.l-group { padding-left: 24px; }
.l-group .ti { margin-left: 7px; }
.l-group .label { margin-left: 5px; }
.l-op { padding-left: 44px; }
.l-op .ti { margin-left: 6px; }
.l-op .label { margin-left: 4px; }
.l-leaf { padding-left: 79px; }
.l-leaf .label { margin-left: 4px; }
.exp { width: 9px; height: 9px; border: 1px solid #999; background: linear-gradient(#999, #999) center / 5px 1px no-repeat #fff; flex: none; }
.hl { background: #c9c9c9; color: #666; padding: 0 3px; }
.blank { margin-left: 4px; width: 168px; height: 17px; background: #f1f1f1; }

/* Backplot dialog */
.dialog {
  position: absolute;
  left: 7px;
  top: 37px;
  width: 235px;
  height: 156px;
  background: #f0f0f0;
  border: 1px solid #c4c4c4;
}
.dlg-title { height: 29px; background: #fff; display: flex; align-items: center; padding: 0 9px 2px 7px; color: #aaa; font-size: 11.500px; }
.dlg-ic { width: 17px; height: 17px; margin-right: 5px; }
.dlg-x { width: 11px; height: 11px; margin-left: auto; }
.dlg-body { padding: 1px 0 0 1px; }
.db {
  width: 25px; height: 25px; flex: none;
  display: flex; align-items: center; justify-content: center;
  background: #e4e4e4;
  border: 1px solid #d4d4d4;
}
.db svg { width: 18px; height: 18px; }
.db.first { width: 20px; height: 20px; margin-left: 1px; }
.db.first svg { width: 15px; height: 15px; }
.db.on { background: #cde5fb; border-color: #5b93c9; }
.gap10 { margin-left: 8px; }
.gap3 { margin-left: 3px; }
.dlg-row { display: flex; margin-top: 11px; gap: 2px; }
.dlg-row.r { margin-top: 1px; padding-left: 115px; gap: 4px; }
.dlg-big { display: flex; gap: 4px; margin-top: 14px; padding-left: 117px; }
.bb { width: 54px; height: 27px; display: flex; align-items: center; justify-content: center; background: #e6e6e6; border: 1px solid #cfcfcf; flex: none; }
.bb svg { width: 22px; height: 22px; }

/* Viewport column */
.view { width: 1225px; flex: none; display: flex; flex-direction: column; background: #ececec; }
.plotbar { height: 32px; flex: none; display: flex; align-items: center; background: #f5f5f5; padding-top: 1px; }
.pb { width: 24.500px; height: 26px; flex: none; display: flex; align-items: center; justify-content: center; background: #ededed; border: 1px solid #e0e0e0; }
.pb svg { width: 16px; height: 16px; }
.pb.mode { margin-left: 8px; width: 24px; }
.pb.onb { width: 24px; background: #cde5fb; border-color: #5b93c9; }
.pb-end { margin-left: 13px; }
.slider { width: 86px; height: 6px; margin: 14px 0 0 16px; background: #e6e6e6; position: relative; flex: none; }
.thumb {
  position: absolute; left: 38px; top: -7px;
  width: 11px; height: 15px;
  background: #0a6fcd;
  clip-path: polygon(50% 0, 100% 30%, 100% 100%, 0 100%, 0 30%);
}
.progress { width: 840px; height: 8px; margin: 10px 0 0 15px; position: relative; flex: none; background: #cd5b44; box-shadow: 0 0 0 1px #e0a394 inset; }
.tick-l, .tick-r { position: absolute; top: -12px; width: 2px; height: 6px; background: #666; }
.tick-l { left: 0; }
.tick-r { right: 0; }
.ptick { position: absolute; left: 272px; top: -3px; width: 7px; height: 14px; background: #a89c88; }
.canvas {
  height: 829px;
  width: 1222px;
  flex: none;
  background: linear-gradient(#9aa0aa 0, #aab0ba 20%, #b9bfc7 34%, #cfd3d8 50%, #e1e4e7 62%, #eff1f4 80%, #fcfcfc 100%);
}
.scene { display: block; width: 1222px; height: 829px; }
.ax-z { font: 700 11px "Liberation Sans", sans-serif; fill: #3a3fa8; text-anchor: middle; }
.ax-x { font: 700 12px "Liberation Sans", sans-serif; fill: #c23040; text-anchor: middle; }
.sc { font: 700 12px "Liberation Sans", sans-serif; fill: #333; text-anchor: middle; }

/* Lower tabs */
.lower { height: 26px; flex: none; display: flex; background: #ececec; font-size: 11px; line-height: 24px; color: #666; }
.ltabs { width: 505px; display: flex; padding-left: 2px; }
.lt { flex: none; text-align: center; white-space: nowrap; }
.lt.on { width: 61px; background: #fff; height: 24px; }
.lt-sol { width: 52px; }
.lt-pla { width: 44px; }
.lt-lev { width: 48px; }
.lt-rec { width: 100px; }
.vtabs { flex: 1; display: flex; padding-left: 3px; }
.vt { width: 94px; background: #fff; height: 24px; display: flex; align-items: center; padding-left: 5px; gap: 6px; color: #666; }
.vt svg { width: 8px; height: 12px; }
.vplus { margin-left: 8px; font-size: 8px; }
.varrows { margin-left: auto; margin-right: 6px; font-size: 9px; letter-spacing: 5px; color: #999; }

/* Status bar */
.status {
  height: 24px;
  flex: none;
  display: flex;
  align-items: center;
  padding-left: 2px;
  background: #f1f1f1;
  font-size: 11px;
  color: #555;
  white-space: nowrap;
}
.status span { flex: none; }
.s-pos { width: 670px; }
.s-sec { width: 124px; }
.s-sel { width: 181px; }
.s-x { width: 95px; }
.s-y { width: 89px; }
.s-z { width: 69px; }
.s-c1 { width: 18px; font-size: 8px; }
.s-3d { width: 30px; }
.s-cp { width: 77px; }
.s-c2 { width: 13px; font-size: 8px; }
.s-tp { width: 76px; }
.s-c3 { width: 15px; font-size: 8px; }
.s-wc { width: 62px; }
.s-c4 { width: 108px; font-size: 8px; }
.ball { width: 12px; height: 12px; border-radius: 50%; background: radial-gradient(circle at 35% 35%, #fff, #b9b9b9); margin-right: 15px; }
.selball { box-shadow: 0 0 0 5px #d8d8d8; }
.half { background: linear-gradient(135deg, #eee 50%, #888 50%); }
```
